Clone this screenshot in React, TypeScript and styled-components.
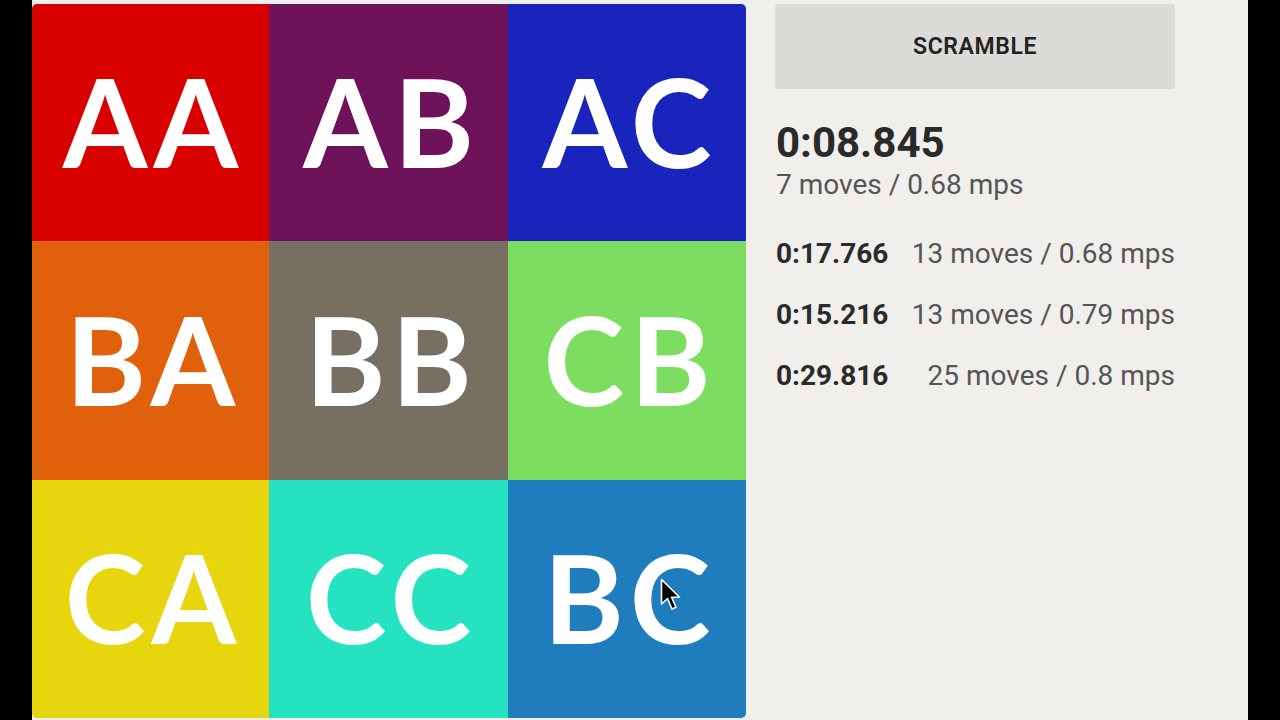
import React from 'react';
import styled, { createGlobalStyle } from 'styled-components';

const GlobalStyle = createGlobalStyle`
  html, body {
    margin: 0;
    padding: 0;
    background: #000;
    width: 1280px;
    height: 720px;
    overflow: hidden;
  }
`;

const Page = styled.div`
  width: 1216px;
  height: 720px;
  margin: 0 32px;
  background: #f0efeb;
  display: flex;
  align-items: flex-start;
  gap: 29px;
  padding-top: 4px;
  box-sizing: border-box;
  font-family: Roboto, 'Liberation Sans', sans-serif;
`;

const Board = styled.div`
  position: relative;
  width: 714px;
  height: 714px;
  display: grid;
  grid-template-columns: 237px 239px 238px;
  grid-template-rows: 237px 239px 238px;
  border-radius: 5px;
  overflow: hidden;
  flex-shrink: 0;
`;

const Tile = styled.div<{ $bg: string }>`
  background: ${(p) => p.$bg};
  color: #fff;
  display: flex;
  align-items: center;
  justify-content: center;
  font-family: Lato, 'Open Sans', sans-serif;
  font-weight: 700;
  font-size: 122px;
  letter-spacing: 6px;
  text-indent: 6px;
  line-height: 1;
  padding-bottom: 4px;
`;

const Cursor = styled.svg`
  position: absolute;
  left: 628px;
  top: 574px;
`;

const Panel = styled.div`
  width: 400px;
  display: flex;
  flex-direction: column;
`;

const ScrambleButton = styled.button`
  height: 85px;
  border: none;
  border-radius: 4px;
  background: #dcdbd7;
  color: #222;
  font-family: Roboto, 'Liberation Sans', sans-serif;
  font-weight: 600;
  font-size: 23px;
  letter-spacing: 0.6px;
  padding-bottom: 2px;
  cursor: pointer;
`;

const Current = styled.div`
  margin-top: 29px;
  padding-left: 1px;
`;

const Time = styled.div`
  font-size: 42px;
  font-weight: 700;
  color: #2a2a2a;
  line-height: 50px;
`;

const Stats = styled.div`
  font-size: 28px;
  color: #555;
  line-height: 32px;
  margin-top: 1px;
`;

const History = styled.div`
  margin-top: 37px;
  display: flex;
  flex-direction: column;
  gap: 29px;
  padding-left: 1px;
`;

const Row = styled.div`
  display: flex;
  justify-content: space-between;
  font-size: 28px;
  line-height: 32px;
`;

const RowTime = styled.span`
  font-weight: 700;
  color: #2a2a2a;
`;

const RowStats = styled.span`
  color: #555;
`;

const tiles = [
  { label: 'AA', bg: '#d90000' },
  { label: 'AB', bg: '#6e1259' },
  { label: 'AC', bg: '#1824bc' },
  { label: 'BA', bg: '#e0600c' },
  { label: 'BB', bg: '#776f61' },
  { label: 'CB', bg: '#7ddd60' },
  { label: 'CA', bg: '#e7d60e' },
  { label: 'CC', bg: '#25e3c0' },
  { label: 'BC', bg: '#1f7dbd' },
];

const history = [
  { time: '0:17.766', stats: '13 moves / 0.68 mps' },
  { time: '0:15.216', stats: '13 moves / 0.79 mps' },
  { time: '0:29.816', stats: '25 moves / 0.8 mps' },
];

export default function App() {
  return (
    <>
      <GlobalStyle />
      <Page>
        <Board>
          {tiles.map((t) => (
            <Tile key={t.label} $bg={t.bg}>
              {t.label}
            </Tile>
          ))}
          <Cursor width="22" height="34" viewBox="0 0 22 34">
            <path
              d="M1.5 1.5 L1.5 26 L7.5 20.5 L12 31 L16 29.3 L11.6 19.2 L19.5 19.2 Z"
              fill="#000"
              stroke="#fff"
              strokeWidth="1.6"
              strokeLinejoin="round"
            />
          </Cursor>
        </Board>
        <Panel>
          <ScrambleButton type="button">SCRAMBLE</ScrambleButton>
          <Current>
            <Time>0:08.845</Time>
            <Stats>7 moves / 0.68 mps</Stats>
          </Current>
          <History>
            {history.map((h) => (
              <Row key={h.time}>
                <RowTime>{h.time}</RowTime>
                <RowStats>{h.stats}</RowStats>
              </Row>
            ))}
          </History>
        </Panel>
      </Page>
    </>
  );
}
